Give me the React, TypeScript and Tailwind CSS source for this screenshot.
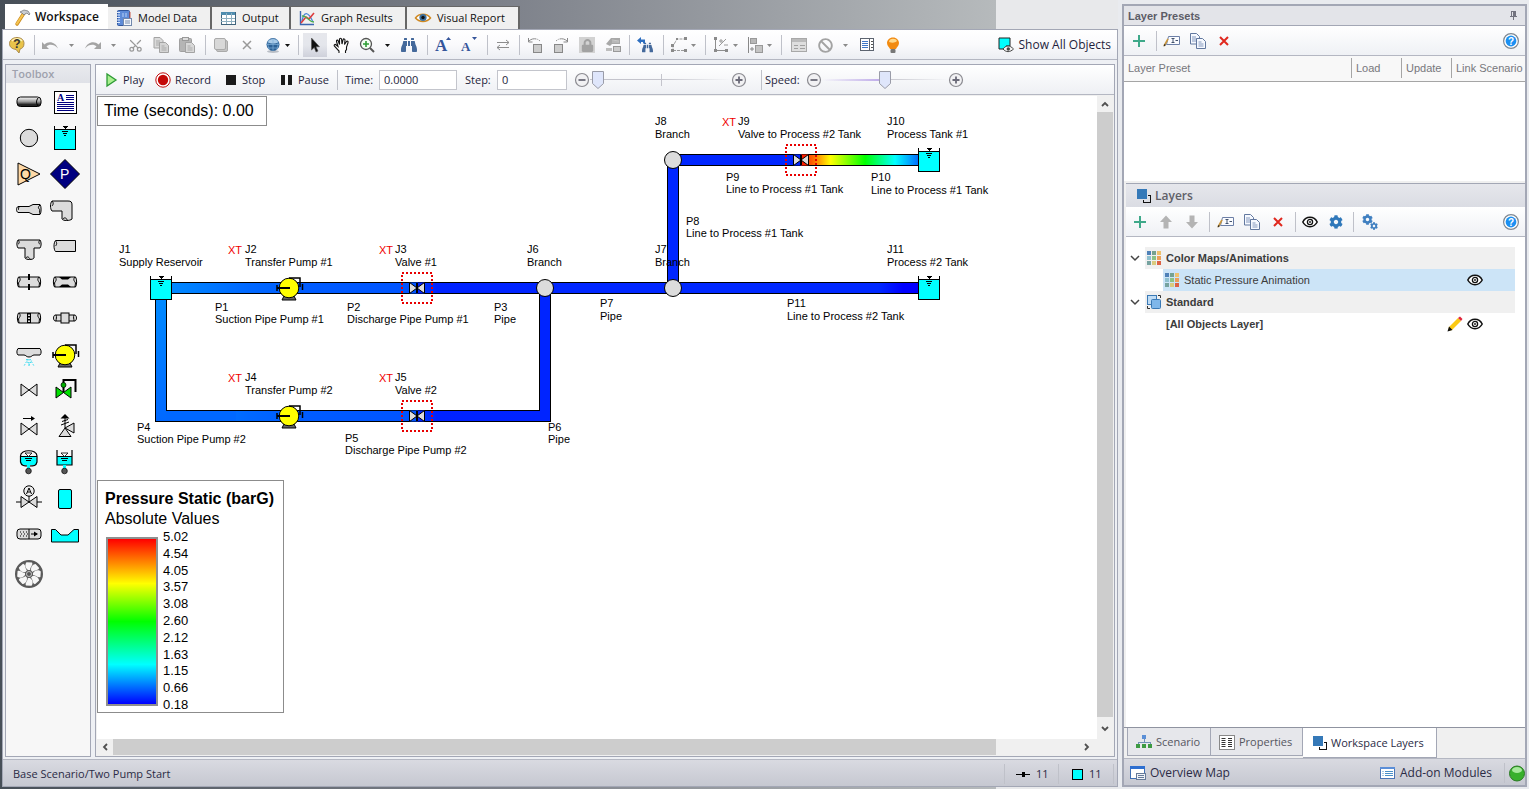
import React, { ReactNode, useState } from "react";
import { FaBan, FaBinoculars, FaCog, FaLock } from "react-icons/fa";
import { Scissors } from "lucide-react";

const UI_FONT = "font-['Open_Sans','Noto_Sans',sans-serif]";
const ARIAL = "font-['Liberation_Sans',Arial,sans-serif]";

type Svg_TP = {
  w?: number;
  h?: number;
  crisp?: boolean;
  children: ReactNode;
};

const Svg = ({ w = 16, h = 16, crisp, children }: Svg_TP) => (
  <svg
    width={w}
    height={h}
    viewBox={`0 0 ${w} ${h}`}
    className="shrink-0 overflow-visible"
    fill="none"
    shapeRendering={crisp ? "crispEdges" : undefined}
    aria-hidden="true"
  >
    {children}
  </svg>
);

/* ---------- tab icons ---------- */

const HammerIcon = () => (
  <Svg>
    <path d="M2 15 9 4" stroke="#c98a1c" strokeWidth="3.4" strokeLinecap="round" />
    <path d="M2 14.6 9 4" stroke="#f6c552" strokeWidth="2" strokeLinecap="round" />
    <path d="M5 3 9 1l4 1 2 3-1 1-2-2-2 1-1 1-2-2Z" fill="#c9cdd2" stroke="#6b6f76" strokeWidth=".7" />
  </Svg>
);

const NotebookIcon = () => (
  <Svg>
    <rect x="1.5" y=".5" width="12" height="15" rx="1" fill="#5d8bd8" stroke="#2e549b" />
    <path d="M1 2.5h3M1 5h3M1 7.5h3M1 10h3M1 12.5h3" stroke="#dce8fb" />
    <path d="M6 4h5M6 6h5" stroke="#b9d2f8" strokeDasharray="2 1" />
    <path d="M14 2v10" stroke="#c85a4a" />
    <rect x="7.5" y="8.5" width="8" height="7" fill="#f5f8fd" stroke="#7188ac" />
    <path d="M9 11h5M9 13h5" stroke="#7188ac" />
  </Svg>
);

const TableIcon = () => (
  <Svg crisp>
    <rect x="1" y="2" width="14" height="12" fill="#fff" stroke="#40647c" />
    <rect x="1" y="2" width="14" height="3" fill="#4e8cae" />
    <path d="M1 8h14M1 11h14M6 3v11M11 3v11" stroke="#8fb0c0" />
  </Svg>
);

const GraphIcon = () => (
  <Svg>
    <path d="M1.5 1v13.5H15" stroke="#3a66b0" strokeWidth="1.4" />
    <path d="M3 11C5 1 9 1 14 12" stroke="#4a86d8" strokeWidth="1.4" />
    <path d="M2 13 7 7l3 2 5-6" stroke="#dd3b3b" strokeWidth="1.6" />
    <path d="M3 6c5-1 6 6 12 6" stroke="#4cae4c" strokeWidth="1.4" />
  </Svg>
);

const ColorEyeIcon = () => (
  <Svg>
    <path d="M.5 8C4 3 12 3 15.5 8 12 12.5 4 12.5.5 8Z" fill="#fff" stroke="#d08a24" strokeWidth="1.5" />
    <circle cx="8" cy="7.5" r="3.6" fill="#3c6f9c" />
    <circle cx="8" cy="7.5" r="1.7" fill="#111" />
  </Svg>
);

/* ---------- main toolbar icons ---------- */

const HelpBalloon = () => (
  <Svg w={18} h={18}>
    <path d="M9 1.5c4 0 7 2.4 7 6s-2 5-4 5.600L11 17l-3-3.600C4 13 1.5 11 1.5 7.5S5 1.5 9 1.5Z" fill="#e9c34a" stroke="#a98a4c" />
    <path d="M4 5c2-3 8-3 10 0" stroke="#fff3b8" strokeWidth="1.5" />
    <text x="9" y="12" textAnchor="middle" fontSize="12" fontWeight="700" fill="#333" fontFamily="Liberation Sans">?</text>
  </Svg>
);

const UndoIcon = ({ flip }: { flip?: boolean }) => (
  <Svg>
    <g transform={flip ? "matrix(-1 0 0 1 16 0)" : undefined}>
      <path d="M0 5v7h7L4.500 9.500C7 7 12 7 16 11.500 14 5.500 7 3 2.500 7.500Z" fill="#a4a4a4" />
    </g>
  </Svg>
);

const Caret = ({ dark }: { dark?: boolean }) => (
  <Svg w={5} h={3}>
    <path d="M0 0h5L2.5 3Z" fill={dark ? "#111" : "#8a8a8a"} />
  </Svg>
);

const CopyGray = () => (
  <Svg>
    <path d="M1 .5h6l3 3V11H1Z" fill="#dadada" stroke="#a3a3a3" />
    <path d="M3 4h4M3 6h5M3 8h5" stroke="#aaa" />
    <path d="M6.5 5.5h6l3 3v7h-9Z" fill="#d4d4d4" stroke="#a3a3a3" />
    <path d="M8.5 9h3M8.5 11h5M8.5 13h5" stroke="#aaa" />
  </Svg>
);

const PasteGray = () => (
  <Svg>
    <rect x=".5" y="1.5" width="12" height="13" rx="1" fill="#b5b5b5" stroke="#a0a0a0" />
    <rect x="3.5" y=".5" width="6" height="3" fill="#ddd" stroke="#999" />
    <path d="M6.5 5.5h6l3 3v7h-9Z" fill="#d8d8d8" stroke="#a3a3a3" />
    <path d="M8.5 9h3M8.5 11h5M8.5 13h5" stroke="#aaa" />
  </Svg>
);

const SquareGray = () => (
  <Svg>
    <rect x="3.5" y="3.5" width="11" height="11" rx="1.5" fill="#c4c4c4" stroke="#aaa" />
    <rect x="1.5" y="1.5" width="11" height="11" rx="1.5" fill="#d8d8d8" stroke="#aaa" />
  </Svg>
);

const CrossIcon = ({ color, width = 1.5 }: { color: string; width?: number }) => (
  <Svg w={10} h={10}>
    <path d="m1 1 8 8M9 1 1 9" stroke={color} strokeWidth={width} />
  </Svg>
);

const GlobeIcon = () => (
  <Svg>
    <ellipse cx="8" cy="14.5" rx="6" ry="1.5" fill="#b9bec6" />
    <circle cx="8" cy="7.5" r="6.5" fill="#2c6196" />
    <path d="M2.5 5C4 1 12 1 13.5 5 11 7 5 7 2.5 5Z" fill="#a9cbe8" />
    <path d="M8 1v13M1.5 7.5h13M3 11h10M4.5 2.5c-2 3-2 7 0 10M11.5 2.5c2 3 2 7 0 10" stroke="#7fb0da" strokeWidth=".7" />
  </Svg>
);

const PointerIcon = () => (
  <Svg>
    <path d="M4.5 1v12l2.800-2.600L9 15l2-.9-2-4.300h3.500Z" fill="#111" stroke="#555" strokeWidth=".6" />
  </Svg>
);

const HandIcon = () => (
  <Svg w={17} h={17}>
    <path
      d="M6 16v-2L1.500 9.200C.5 7.800 2 6.800 3.200 8L5 9.500 3.500 4.500C3.200 3 4.800 2.500 5.300 4L6.500 7.500V2.500c0-1.600 2-1.600 2.100 0L9 7l1-4.200c.4-1.500 2.200-1 2 .5L11.500 7.500l1.800-2.700c.8-1.200 2.200-.4 1.700.9L13.500 10v2.500L12.500 14v2"
      fill="#fff"
      stroke="#111"
      strokeWidth="1.1"
    />
  </Svg>
);

const ZoomIcon = () => (
  <Svg>
    <circle cx="7" cy="7" r="5.5" fill="#f6fff4" stroke="#555" strokeWidth="1.3" />
    <path d="m11 11 4 4" stroke="#555" strokeWidth="2" />
    <path d="M7 4v6M4 7h6" stroke="#2f9e35" strokeWidth="1.6" />
  </Svg>
);

const FontSizeIcon = ({ down }: { down?: boolean }) => (
  <Svg w={18} h={20}>
    <text x="1" y="16" fontSize={down ? 13 : 17} fontWeight="700" fill="#35559a" fontFamily="Liberation Serif">A</text>
    <path d={down ? "M12 2h5l-2.500 3Z" : "M12 5h5l-2.500-3Z"} fill="#35559a" />
  </Svg>
);

const SwapIcon = () => (
  <Svg>
    <path d="M2 5.500h12M2 10.500h12M11 3l3 2.500L11 8M5 8l-3 2.500L5 13" stroke="#8d8d8d" />
  </Svg>
);

const RotateIcon = ({ flip }: { flip?: boolean }) => (
  <Svg>
    <g transform={flip ? "matrix(-1 0 0 1 16 0)" : undefined}>
      <rect x="6.5" y="7.5" width="8" height="8" fill="#ccc" stroke="#888" />
      <path d="M2 4c3-3 8-3 11 0" stroke="#888" strokeDasharray="8 1 1 1" />
      <path d="M1.5 1v4h4" stroke="#888" />
    </g>
  </Svg>
);

const SnapHandIcon = () => (
  <Svg>
    <path d="M1 7 6 1h9v6H7L5 9Z" fill="#a8a8a8" />
    <path d="m7 3 7 1M7 5h7" stroke="#c8c8c8" />
    <rect x="8.5" y="9.5" width="7" height="5" fill="#ccc" stroke="#999" />
    <path d="M1 11h6v3H1Z" fill="#bdbdbd" />
  </Svg>
);

const FindPrevIcon = () => (
  <div className="relative flex h-4 w-4 items-end justify-end">
    <FaBinoculars size={11} color="#44699b" />
    <svg className="absolute left-0 top-0" width="9" height="7" viewBox="0 0 9 7" aria-hidden="true">
      <path d="M0 3.5 4 0v2.5h4v4H6V5H4v2Z" fill="#2e6fc0" />
    </svg>
  </div>
);

const PolyIcon = () => (
  <Svg>
    <path d="M2 14.500V9l4-7h8M2 13.500h12" stroke="#999" strokeDasharray="3 1" />
    <path d="M13 0h3v3h-3zM0 7h3v3H0zM0 12h3v3H0zM13 12h3v3h-3zM5 1h2v2H5z" fill="#8a8a8a" />
  </Svg>
);

const AxisIcon = () => (
  <Svg>
    <path d="M2.500 1v12.500H14" stroke="#8d8d8d" />
    <path d="M1 0h3v3H1zM1 12h3v3H1zM12 12h3v3h-3z" fill="#8a8a8a" />
    <path d="M6 9 13 2M8 2v4M6 4h4M11 8h4" stroke="#999" />
  </Svg>
);

const AlignIcon = () => (
  <Svg>
    <path d="M1.5 0v16" stroke="#888" />
    <rect x="3.5" y="1.5" width="6" height="5" fill="#b8b8b8" stroke="#999" />
    <rect x="8.5" y="8.5" width="7" height="7" fill="#c4c4c4" stroke="#999" />
    <path d="M3 12h4M5 10v4" stroke="#888" />
  </Svg>
);

const FormIcon = () => (
  <Svg>
    <rect x=".5" y="1.5" width="15" height="13" fill="#dedede" stroke="#a8a8a8" />
    <path d="M1 2h14v3H1z" fill="#bbb" />
    <path d="M3 8.500h4M3 11.500h4M9 8.500h5M9 11.500h5" stroke="#a0a0a0" />
  </Svg>
);

const ListWindowIcon = () => (
  <Svg>
    <rect x="1.5" y="1.500" width="13" height="12" fill="#fff" stroke="#5d6470" />
    <path d="M10.500 2v11" stroke="#5d6470" />
    <path d="M3 4.500h6M3 6.500h6M3 8.500h6M3 10.500h6" stroke="#3f78c8" />
    <path d="M12 4.500h2M12 7.500h2M12 10.500h2" stroke="#555" />
  </Svg>
);

const BulbIcon = () => (
  <Svg w={14} h={17}>
    <path d="M7 .5C3.500.5 1 3 1 6s2.500 4.500 3 6h6c.5-1.500 3-3 3-6S10.500.5 7 .5Z" fill="#f28a10" />
    <path d="M3 5c0-4 7-4 8-1-2 2-5 2-8 1Z" fill="#ffd98c" />
    <rect x="4.5" y="12" width="5" height="4" rx="1" fill="#777" />
  </Svg>
);

const ShowAllIcon = () => (
  <Svg>
    <path d="M1 1h11v8H8v3H1Z" fill="#0ff" stroke="#222" />
    <path d="M5 12c3-4 7-4 10.500 0C12 15.500 8 15.500 5 12Z" fill="#f3f3f3" stroke="#444" />
    <circle cx="10.3" cy="12" r="1.7" fill="#444" />
  </Svg>
);

/* ---------- toolbox icons ---------- */

const P = "#dcdcdc";

const PipeIcon = () => (
  <Svg w={26} h={12}>
    <defs>
      <linearGradient id="pipe" x1="0" y1="0" x2="0" y2="1">
        <stop offset="0" stopColor="#fff" />
        <stop offset=".5" stopColor="#999" />
        <stop offset=".8" stopColor="#222" />
      </linearGradient>
    </defs>
    <rect x="1" y="1" width="24" height="9.5" rx="3.5" fill="url(#pipe)" stroke="#000" />
    <path d="M22 2c-2 3-2 5 0 8" stroke="#000" />
  </Svg>
);

const AnnotationIcon = () => (
  <Svg w={23} h={23}>
    <rect x=".5" y=".5" width="22" height="22" fill="#fff" stroke="#000" />
    <text x="3" y="10" fontSize="10" fill="#000080" fontFamily="Liberation Serif" fontWeight="700">A</text>
    <path d="M12 4.500h8M12 6.500h8M12 8.500h8M3 11.500h17M3 13.500h17M3 15.500h17M3 17.500h17M3 19.500h17" stroke="#000080" />
  </Svg>
);

const BranchIcon = () => (
  <Svg w={20} h={20}>
    <circle cx="10" cy="10" r="8.7" fill={P} stroke="#000" />
  </Svg>
);

const ReservoirIcon = () => (
  <Svg w={24} h={26} crisp>
    <rect x="2" y="4" width="20" height="20" fill="#0ff" />
    <path d="M1.5 1v23.5h21V1M1.5 4.5h21" stroke="#000" />
    <path d="M9 1h6l-3 3Z" fill="#000" />
    <path d="M9 6.5h6M10 8.5h4M11 10.5h2" stroke="#000" />
  </Svg>
);

const FlowIcon = () => (
  <Svg w={26} h={26}>
    <path d="M2 2v22l22-11Z" fill="#ffd9a6" stroke="#000" />
    <text x="4" y="18" fontSize="14" fill="#000" fontFamily="Liberation Sans">Q</text>
  </Svg>
);

const PressureIcon = () => (
  <Svg w={30} h={30}>
    <path d="M15 .5 29.500 15 15 29.500.5 15Z" fill="#000080" stroke="#000" />
    <text x="10" y="20" fontSize="14" fill="#fff" fontFamily="Liberation Sans">P</text>
  </Svg>
);

const AreaChangeIcon = () => (
  <Svg w={26} h={14}>
    <path d="M2 3.500h11l4-2h7c1.500 2 1.500 8 0 10h-7l-4-2H2C0 8.500 0 4.500 2 3.500Z" fill={P} stroke="#000" />
    <path d="M3 4c-1 1.500 0 2.500-1 3M24 2c-3 3-1 4 0 4.500-1 2 0 3 0 4.500" stroke="#000" />
  </Svg>
);

const BendIcon = () => (
  <Svg w={30} h={20}>
    <path d="M2 1h16c3 0 4 1 4 4v14c-2 2-9 2-10 0v-8H2c-2-2-2-8 0-10Z" fill={P} stroke="#000" />
    <path d="M2 1c2 2 1 4 0 5M13 19c1-2 4-1 4 1" stroke="#000" />
  </Svg>
);

const TeeIcon = () => (
  <Svg w={26} h={14}>
    <path d="M2 1h22c1.500 2 1.500 6 0 8h-6v10c-1 2-8 2-9 0V9H2C.5 7 .5 3 2 1Z" fill={P} stroke="#000" />
    <path d="M2 1c2 2 1 4 0 4M24 1c-2 2-1 4 0 4M10 19c1-2 3-1 4 1" stroke="#000" />
  </Svg>
);

const DeadEndIcon = () => (
  <Svg w={24} h={14}>
    <path d="M2.500 1.500h20v11h-20c-2-2-2-9 0-11Z" fill={P} stroke="#000" />
    <path d="M2.500 2c2 2 1 4 0 5" stroke="#000" />
  </Svg>
);

const Segment = ({ children }: { children?: ReactNode }) => (
  <Svg w={26} h={16}>
    <path d="M2.500 3h21c1.500 2 1.500 8 0 10h-21C1 11 1 5 2.500 3Z" fill={P} stroke="#000" />
    <path d="M3 3c2 2 1 4 0 5-1 1 0 3 0 5M23 3c-2 2-1 4 0 5 1 1 0 3 0 5" stroke="#000" />
    {children}
  </Svg>
);

const OrificeIcon = () => (
  <Segment>
    <path d="M13 0v6M13 10v6" stroke="#000" strokeWidth="2" />
  </Segment>
);

const VenturiIcon = () => (
  <Segment>
    <path d="M7 3h12l-3 2.500h-6ZM7 13h12l-3-2.500h-6Z" fill="#000" />
  </Segment>
);

const ScreenIcon = () => (
  <Segment>
    <path d="M11.500 3v10M14.500 3v10" stroke="#000" />
    <path d="M13 3v10" stroke="#000" strokeWidth="2" strokeDasharray="1.5 1.5" />
  </Segment>
);

const FittingIcon = () => (
  <Svg w={26} h={12}>
    <path d="M3 3h20c2 1 2 5 0 6H3C1 8 1 4 3 3Z" fill={P} stroke="#000" />
    <rect x="9" y="1" width="8" height="10" fill={P} stroke="#000" />
    <path d="M4 3c1 2 0 4 0 6M22 3c-1 2 0 4 0 6" stroke="#000" />
  </Svg>
);

const SprayIcon = () => (
  <Svg w={26} h={14}>
    <path d="M2 1.500h22c1.500 2 1.500 5 0 6.500h-6c-2 0-2 2-5 2s-3-2-5-2H2C.5 6.500.5 3.500 2 1.500Z" fill={P} stroke="#000" />
    <path d="M12 12 8 19M14 12l4 7M13 12v7M10.500 12 13 18l3-5" stroke="#25d8f0" strokeDasharray="1.5 1.5" />
  </Svg>
);

// shared by the toolbox and the nodes on the canvas
const PumpShape = () => (
  <>
    <path d="M8 20 6 24h14l-2-4Z" fill="#666" stroke="#000" />
    <circle cx="13" cy="12" r="9.8" fill="#ff0" stroke="#000" />
    <path d="M13 2h11v9M26.500 8v6M1 9v6" stroke="#000" strokeWidth="1.5" fill="none" />
    <path d="M1 12h13" stroke="#000" strokeWidth="2" />
  </>
);

const PumpIcon = () => (
  <Svg w={27} h={23}>
    <PumpShape />
  </Svg>
);

const ValveIcon = () => (
  <Svg w={18} h={14}>
    <path d="M1 1v12L17 1v12Z" fill={P} stroke="#000" />
  </Svg>
);

const ControlValveIcon = () => (
  <Svg w={20} h={22}>
    <path d="M1 8v11l15-11v11Z" fill="#00e000" stroke="#000" />
    <path d="M8.500 13V1h12v12" stroke="#000" strokeWidth="2" />
    <circle cx="8.5" cy="6" r="2.5" fill="#00b000" stroke="#000" strokeWidth=".7" />
  </Svg>
);

const CheckValveIcon = () => (
  <Svg w={18} h={20}>
    <path d="M1 7v12L17 7v12Z" fill={P} stroke="#000" />
    <path d="M3 2.500h9" stroke="#000" />
    <path d="M11 0v5l4-2.500Z" fill="#000" />
  </Svg>
);

const ReliefValveIcon = () => (
  <Svg w={15} h={24}>
    <path d="m7 14 9-5v10ZM7 14l6 8.500H1Z" fill={P} stroke="#000" />
    <path d="M7 14V3M3 11l8-3M4 7.500l6-2" stroke="#000" />
    <path d="M2.500 4.500h9L7 0Z" fill="#000" />
  </Svg>
);

const AccumulatorIcon = ({ open }: { open?: boolean }) => (
  <Svg w={20} h={26}>
    <rect x={open ? 2 : 1.5} y="8" width={open ? 15 : 16.5} height="8" rx={open ? 0 : 2} fill="#0ff" />
    <path
      d={open ? "M2 1v15h15V1M2 7.500h15" : "M1.500 7c0-7 16.500-7 16.500 0v6c-1 4-3 4-8 4s-7.500 0-8.500-4ZM1.500 7.500H18"}
      stroke="#000"
      strokeWidth="1.2"
    />
    <path d="M6 4h7l-3.500 3.500Z" fill="#fff" stroke="#000" strokeWidth=".8" />
    <path d="M6 9.500h7M7 11.500h5" stroke="#000" />
    <path d="M9.500 16v5" stroke="#0ff" strokeWidth="3" />
    <circle cx="9.5" cy="22" r="2.8" fill="#555" stroke="#000" strokeWidth=".7" />
  </Svg>
);

const ActuatorIcon = () => (
  <Svg w={26} h={26}>
    <circle cx="13" cy="6" r="5.2" fill="#eee" stroke="#000" />
    <path d="M10.500 9 13 3l2.500 6M11.500 7h3M13 11v6M0 17h26" stroke="#000" />
    <path d="M5 11.500v11l16-11v11Z" fill={P} stroke="#000" />
  </Svg>
);

const VesselIcon = () => (
  <Svg w={16} h={20}>
    <rect x="1.5" y="1.5" width="13" height="19" rx="1.5" fill="#0ff" stroke="#000" />
  </Svg>
);

const SeparatorIcon = () => (
  <Svg w={26} h={12}>
    <rect x="1" y="1" width="24" height="10" rx="3" fill={P} stroke="#000" />
    <path d="M13 1v10M15 6h6" stroke="#000" />
    <path d="M18 3.500v5l4-2.500Z" fill="#000" />
    <path d="M4 4h8M5 6h7M4 8h8" stroke="#000" strokeDasharray="1 2" />
  </Svg>
);

const WeirIcon = () => (
  <Svg w={28} h={13}>
    <path d="M.5 1.500h4L10 7h7l6-5.500h4.500v12.500H.5Z" fill="#0ff" stroke="#000" />
  </Svg>
);

const TurbineIcon = () => (
  <Svg w={30} h={30}>
    <circle cx="15" cy="15" r="13" fill="#5f5f5f" stroke="#5a5a5a" strokeWidth="2" />
    {[0, 45, 90, 135, 180, 225, 270, 315].map((deg) => (
      <path key={deg} d="M14 11C10.500 8.500 11 5 12.500 3.200L18 3.600C19.500 6 16 8 16.200 11Z" fill="#f7f7f7" transform={`rotate(${deg} 15 15)`} />
    ))}
    <circle cx="15" cy="15" r="2.5" fill="#555" stroke="#ddd" strokeWidth=".8" />
  </Svg>
);

/* ---------- layer panel icons ---------- */

const PlusIcon = () => (
  <Svg w={12} h={12} crisp>
    <path d="M5 0h2v12H5zM0 5h12v2H0z" fill="#3fa98a" />
  </Svg>
);

const RenameIcon = () => (
  <Svg w={18} h={12}>
    <path d="M5.500 1.500h11v8h-13Z" fill="#fbfcff" stroke="#6c7fa6" />
    <path d="M8.500 3.500h3M8.500 7.500h3M10 3.500v4M12.500 5.500h2.500" stroke="#44546e" />
    <path d="m1 11 4-7" stroke="#c9953a" strokeWidth="1.6" />
    <path d="m.5 11.500 1-2.500 1.500 1Z" fill="#222" />
  </Svg>
);

const CopyIcon = () => (
  <Svg>
    <path d="M.5.5h6l3 3V11H.5Z" fill="#f6f9ff" stroke="#62789f" />
    <path d="M2 4h4M2 6h5M2 8h5" stroke="#8498bd" />
    <path d="M6.5 5.5h6l3 3v7h-9Z" fill="#f6f9ff" stroke="#62789f" />
    <path d="M8.5 9h3M8.5 11h5M8.5 13h5" stroke="#8498bd" />
  </Svg>
);

const InfoIcon = () => (
  <Svg>
    <circle cx="8" cy="8" r="7.4" fill="#fff" stroke="#7d8791" strokeWidth="1.2" />
    <circle cx="8" cy="8" r="5.4" fill="#1b90f2" />
    <text x="8" y="11.5" textAnchor="middle" fontSize="10" fontWeight="700" fill="#fff" fontFamily="Liberation Sans">?</text>
  </Svg>
);

const PinIcon = () => (
  <Svg w={7} h={9} crisp>
    <path d="M1 0h5v5H1zM0 5h7v1H0zM3 6h1v3H3z" fill="#73737f" />
    <path d="M2 1h1v4H2z" fill="#e3e4e9" />
  </Svg>
);

const ArrowIcon = ({ down }: { down?: boolean }) => (
  <Svg w={14} h={14}>
    <path d="M7 .5 13 7H9.500v6.500h-5V7H1Z" fill="#b4b4b4" transform={down ? "rotate(180 7 7)" : undefined} />
  </Svg>
);

const EyeIcon = () => (
  <Svg w={16} h={12}>
    <path d="M.8 6C4-.2 12-.2 15.200 6 12 12.200 4 12.200.8 6Z" fill="#fff" stroke="#111" strokeWidth="1.5" />
    <circle cx="8" cy="6" r="2.6" stroke="#111" strokeWidth="1.3" />
    <circle cx="8" cy="6" r=".9" fill="#111" />
  </Svg>
);

const GearsIcon = () => (
  <div className="relative h-4 w-4">
    <FaCog size={11} color="#3f7fc0" />
    <FaCog size={8} color="#3f7fc0" className="absolute bottom-0 right-0" />
  </div>
);

const GridIcon = () => {
  const colors = ["#4f81b8", "#76a290", "#efc16c", "#8fc0cf", "#8cc286", "#eba15a", "#76a3a0", "#d9cb7f", "#dd6245"];
  return (
    <Svg w={14} h={14} crisp>
      {colors.map((c, i) => (
        <rect key={c} x={(i % 3) * 5} y={Math.floor(i / 3) * 5} width="4" height="4" fill={c} />
      ))}
    </Svg>
  );
};

const StandardIcon = () => (
  <Svg w={14} h={14}>
    <rect x=".5" y=".5" width="9" height="9" fill="#bfdcf5" stroke="#3a79b5" />
    <rect x="4.5" y="4.5" width="9" height="9" rx="1" fill="#7fb7ea" stroke="#3a79b5" />
    <path d="M11 .5h2.500V3M.5 11v2.500H3" stroke="#333" />
  </Svg>
);

const LayersIcon = () => (
  <Svg w={14} h={14} crisp>
    <path d="M0 0h10v10H0z" fill="#3579b8" />
    <path d="M11 6h3v8H6v-3h1v2h6V7h-2Z" fill="#111" />
  </Svg>
);

const PencilIcon = () => (
  <Svg>
    <path d="M1 15 2 11 11 2l3 3-9 9Z" fill="#fbc913" />
    <path d="m11 2 2-1.500L15.500 3 14 5Z" fill="#e0263c" />
    <path d="m.5 15.500 1.500-5L5.500 14Z" fill="#111" />
  </Svg>
);

const ScenarioIcon = () => (
  <Svg crisp>
    <path d="M8 4v5M2 11V8h12v3" stroke="#6f90b5" />
    <path d="M6 1h4v4H6z" fill="#5b8fd6" />
    <path d="M0 10h4v4H0zM6 10h4v4H6zM12 10h4v4h-4z" fill="#3d9a42" />
  </Svg>
);

const PropertiesIcon = () => (
  <Svg>
    <rect x=".5" y="1.5" width="15" height="14" fill="#fff" stroke="#888" />
    <path d="M2.500 4.500h4M2.500 6.500h4M2.500 8.500h4M2.500 10.500h4M2.500 12.500h4M9 4.500h4M9 6.500h4M9 8.500h4M9 10.500h4M9 12.500h4" stroke="#333" />
  </Svg>
);

const OverviewIcon = () => (
  <Svg>
    <rect x=".5" y="1.5" width="14" height="12" fill="#fff" stroke="#3f6fb5" />
    <path d="M0 1h15v3H0z" fill="#2f6fd0" />
    <rect x="6.5" y="8.500" width="9" height="6" fill="#eef2f8" stroke="#667a99" />
    <path d="M8 10.500h6M8 12.500h6" stroke="#667a99" />
  </Svg>
);

const ModulesIcon = () => (
  <Svg>
    <rect x=".5" y="2.500" width="14" height="11" fill="#fff" stroke="#4b75b5" />
    <path d="M0 2h15v2H0z" fill="#5c8fd8" />
    <path d="M2.500 6.500h1M2.500 8.500h1M2.500 10.500h1M5 6.500h8M5 8.500h8M5 10.500h8" stroke="#4a90c8" />
  </Svg>
);

/* ---------- shared parts ---------- */

const Sep = ({ className }: { className: string }) => (
  <span className={`flex shrink-0 justify-center ${className}`}>
    <span className="h-5 w-px bg-[#bfc1c9]" />
  </span>
);

type ToolButton_TP = {
  label: string;
  className: string;
  children: ReactNode;
};

const ToolButton = ({ label, className, children }: ToolButton_TP) => (
  <button
    type="button"
    aria-label={label}
    className={`flex h-6 shrink-0 items-center justify-center gap-1 ${className}`}
  >
    {children}
  </button>
);

/* ---------- top tabs ---------- */

const tabs = [
  { title: "Model Data", icon: <NotebookIcon />, className: "w-[104px]" },
  { title: "Output", icon: <TableIcon />, className: "w-[79px]" },
  { title: "Graph Results", icon: <GraphIcon />, className: "w-[116px]" },
  { title: "Visual Report", icon: <ColorEyeIcon />, className: "w-[113px]" },
];

const TopTabs = () => (
  <nav className="flex h-[29px] shrink-0 items-end pl-[3px]" aria-label="Views">
    <button type="button" className="flex h-[25px] w-[103px] items-center gap-1 bg-white pl-2.5 font-semibold">
      <HammerIcon />
      Workspace
    </button>
    {tabs.map((tab) => (
      <button
        key={tab.title}
        type="button"
        className={`flex h-[23px] items-center gap-1.5 border-r-2 border-t border-[#666] bg-[#f0f0f0] pl-2 text-[11px] whitespace-nowrap ${tab.className}`}
      >
        {tab.icon}
        {tab.title}
      </button>
    ))}
  </nav>
);

const MainToolbar = () => (
  <div className="flex h-[30px] shrink-0 items-center overflow-hidden border-b border-[#b4b7c2] bg-linear-to-b from-white via-[#fafafc] to-[#eceef3] pl-0.5 pt-px">
    <ToolButton label="Help" className="w-6"><HelpBalloon /></ToolButton>
    <Sep className="w-2.5" />
    <ToolButton label="Undo" className="w-[22px]"><UndoIcon /></ToolButton>
    <ToolButton label="Undo list" className="w-5"><Caret /></ToolButton>
    <ToolButton label="Redo" className="w-6"><UndoIcon flip /></ToolButton>
    <ToolButton label="Redo list" className="w-4"><Caret /></ToolButton>
    <ToolButton label="Cut" className="w-7"><Scissors size={15} color="#999" className="-rotate-90" /></ToolButton>
    <ToolButton label="Copy" className="w-6"><CopyGray /></ToolButton>
    <ToolButton label="Paste" className="w-7"><PasteGray /></ToolButton>
    <Sep className="w-2" />
    <ToolButton label="Duplicate" className="w-6"><SquareGray /></ToolButton>
    <ToolButton label="Delete" className="w-7"><CrossIcon color="#999" /></ToolButton>
    <ToolButton label="Web" className="w-8"><GlobeIcon /><Caret dark /></ToolButton>
    <Sep className="w-2.5" />
    <ToolButton label="Select" className="w-6 bg-linear-to-b from-[#e6e7ec] via-[#e4e6ec] to-[#cfd1db]"><PointerIcon /></ToolButton>
    <ToolButton label="Pan" className="w-7"><HandIcon /></ToolButton>
    <ToolButton label="Zoom" className="w-6"><ZoomIcon /></ToolButton>
    <ToolButton label="Zoom list" className="w-4"><Caret dark /></ToolButton>
    <ToolButton label="Find" className="w-7"><FaBinoculars size={16} color="#44699b" /></ToolButton>
    <Sep className="w-2" />
    <ToolButton label="Larger text" className="w-6"><FontSizeIcon /></ToolButton>
    <ToolButton label="Smaller text" className="w-7"><FontSizeIcon down /></ToolButton>
    <Sep className="w-2" />
    <ToolButton label="Reverse" className="w-6"><SwapIcon /></ToolButton>
    <Sep className="w-2" />
    <ToolButton label="Rotate left" className="w-6"><RotateIcon /></ToolButton>
    <ToolButton label="Rotate right" className="w-7"><RotateIcon flip /></ToolButton>
    <ToolButton label="Lock" className="w-6">
      <span className="flex h-4 w-4 items-center justify-center bg-[#d2d2d2]"><FaLock size={13} color="#a2a2a2" /></span>
    </ToolButton>
    <ToolButton label="Customize" className="w-7"><SnapHandIcon /></ToolButton>
    <Sep className="w-1" />
    <ToolButton label="Find previous" className="w-7"><FindPrevIcon /></ToolButton>
    <Sep className="w-2" />
    <ToolButton label="Segments" className="w-8"><PolyIcon /><Caret /></ToolButton>
    <Sep className="w-3" />
    <ToolButton label="Scale" className="w-7"><AxisIcon /><Caret /></ToolButton>
    <ToolButton label="Align" className="w-10"><AlignIcon /><Caret /></ToolButton>
    <Sep className="w-1" />
    <ToolButton label="Edit" className="w-8"><FormIcon /></ToolButton>
    <ToolButton label="Special conditions" className="w-5"><FaBan size={15} color="#a3a3a3" /></ToolButton>
    <ToolButton label="Special conditions list" className="w-5"><Caret /></ToolButton>
    <ToolButton label="Inspect" className="w-6"><ListWindowIcon /></ToolButton>
    <ToolButton label="Tips" className="w-7"><BulbIcon /></ToolButton>
    <button type="button" className="ml-auto flex shrink-0 items-center gap-1 pr-1.5 text-[#1e1e3c]">
      <ShowAllIcon />
      Show All Objects
    </button>
  </div>
);

/* ---------- toolbox ---------- */

const toolboxItems: [string, ReactNode][] = [
  ["Pipe", <PipeIcon />],
  ["Annotation", <AnnotationIcon />],
  ["Branch", <BranchIcon />],
  ["Reservoir", <ReservoirIcon />],
  ["Assigned Flow", <FlowIcon />],
  ["Assigned Pressure", <PressureIcon />],
  ["Area Change", <AreaChangeIcon />],
  ["Bend", <BendIcon />],
  ["Tee", <TeeIcon />],
  ["Dead End", <DeadEndIcon />],
  ["Orifice", <OrificeIcon />],
  ["Venturi", <VenturiIcon />],
  ["Screen", <ScreenIcon />],
  ["General Component", <FittingIcon />],
  ["Spray Discharge", <SprayIcon />],
  ["Pump", <PumpIcon />],
  ["Valve", <ValveIcon />],
  ["Control Valve", <ControlValveIcon />],
  ["Check Valve", <CheckValveIcon />],
  ["Relief Valve", <ReliefValveIcon />],
  ["Gas Accumulator", <AccumulatorIcon />],
  ["Surge Tank", <AccumulatorIcon open />],
  ["Vacuum Breaker", <ActuatorIcon />],
  ["Heat Exchanger", <VesselIcon />],
  ["Volume Balance", <SeparatorIcon />],
  ["Weir", <WeirIcon />],
];

const Toolbox = () => (
  <section className="flex w-[86px] shrink-0 flex-col border border-[#a3a7b5] bg-[#f7f7f7]" aria-label="Toolbox">
    <h2 className="h-[18px] shrink-0 bg-linear-to-b from-[#e9eaee] to-[#dfe1e7] pl-1.5 text-[11px] font-semibold leading-[18px] text-[#9ea1ad]">
      Toolbox
    </h2>
    <div className="grid grid-cols-[36px_36px] auto-rows-[36px] pl-[5px] pt-px">
      {toolboxItems.map(([label, icon]) => (
        <button key={label} type="button" aria-label={label} className="flex items-center justify-center">
          {icon}
        </button>
      ))}
      <button type="button" aria-label="Turbine" className="flex h-11 items-center justify-center">
        <TurbineIcon />
      </button>
    </div>
  </section>
);

/* ---------- playback bar ---------- */

const RoundButton = ({ label, plus }: { label: string; plus?: boolean }) => (
  <button type="button" aria-label={label} className="shrink-0">
    <Svg>
      <circle cx="8" cy="8" r="6.5" fill="#f1f1f3" stroke="#8b8b91" strokeWidth="1.2" />
      <path d={plus ? "M4.500 8h7M8 4.500v7" : "M4.500 8h7"} stroke="#6a6a78" strokeWidth="1.8" />
    </Svg>
  </button>
);

type Slider_TP = {
  label: string;
  start: number;
  className: string;
  children: ReactNode;
};

const Slider = ({ label, start, className, children }: Slider_TP) => {
  const [value, setValue] = useState(start);
  return (
    <div className={`relative flex h-5 shrink-0 items-center ${className}`}>
      {children}
      <span className="absolute top-px -translate-x-1/2" style={{ left: `${value}%` }}>
        <Svg w={12} h={18}>
          <path d="M.5.5h11v12L6 17.500.5 12.500Z" fill="#dfe6fb" stroke="#9a9ca8" />
        </Svg>
      </span>
      <input
        type="range"
        aria-label={label}
        min={0}
        max={100}
        value={value}
        onChange={(e) => setValue(Number(e.target.value))}
        className="absolute inset-0 w-full opacity-0"
      />
    </div>
  );
};

const PlayBar = () => (
  <div className="flex h-[30px] shrink-0 items-center overflow-hidden border-b border-[#b4b7c2] bg-linear-to-b from-white to-[#eef0f4] pl-2.5 text-[11px] text-[#1e1e3c]">
    <button type="button" className="flex w-[49px] shrink-0 items-center gap-1.5">
      <Svg w={11} h={14}>
        <path d="M1 1v12l9-6Z" fill="#a9f08f" stroke="#2c9a34" strokeWidth="1.3" />
      </Svg>
      Play
    </button>
    <button type="button" className="flex w-[71px] shrink-0 items-center gap-1">
      <Svg>
        <circle cx="8" cy="8" r="7.2" fill="#fff" stroke="#c00d0d" />
        <circle cx="8" cy="8" r="5.2" fill="#c40808" />
      </Svg>
      Record
    </button>
    <button type="button" className="flex w-[55px] shrink-0 items-center gap-1.5">
      <span className="h-2.5 w-2.5 bg-[#1b1b1b]" />
      Stop
    </button>
    <button type="button" className="flex w-[52px] shrink-0 items-center gap-1.5">
      <span className="flex gap-[3px]">
        <span className="h-2.5 w-1 bg-[#1b1b1b]" />
        <span className="h-2.5 w-1 bg-[#1b1b1b]" />
      </span>
      Pause
    </button>
    <Sep className="mr-1 w-2" />
    <label className="flex shrink-0 items-center">
      <span className="w-[34px]">Time:</span>
      <input type="text" defaultValue="0.0000" className="h-5 w-[78px] border border-[#c3c5cc] bg-white px-1 text-[11px] text-[#1e1e3c]" />
    </label>
    <label className="ml-2 flex shrink-0 items-center">
      <span className="w-8">Step:</span>
      <input type="text" defaultValue="0" className="h-5 w-[70px] border border-[#c3c5cc] bg-white px-1 text-[11px] text-[#1e1e3c]" />
    </label>
    <div className="ml-[7px] flex shrink-0 items-center">
      <RoundButton label="Step back" />
      <Slider label="Position" start={6} className="w-[141px]">
        <span className="h-px w-full bg-linear-to-r from-[#c4c4cc] via-[#c4c4cc] to-transparent" />
        <span className="absolute left-1/2 top-1 h-3 w-px bg-[#c4c4cc]" />
      </Slider>
      <RoundButton label="Step forward" plus />
    </div>
    <Sep className="ml-2.5 w-2" />
    <span className="w-[35px] shrink-0">Speed:</span>
    <div className="ml-1.5 flex shrink-0 items-center">
      <RoundButton label="Slower" />
      <Slider label="Speed" start={50} className="w-[126px]">
        <span className="h-0.5 w-1/2 bg-linear-to-r from-transparent to-[#bba6e8]" />
        <span className="h-px w-1/2 bg-linear-to-r from-[#c4c4cc] to-transparent" />
      </Slider>
      <RoundButton label="Faster" plus />
    </div>
  </div>
);

/* ---------- workspace canvas ---------- */

type Label_TP = { x: number; y: number; gap: number; id: string; text: string; xt?: number };

const labels: Label_TP[] = [
  { id: "J1", text: "Supply Reservoir", x: 119, y: 253, gap: 13 },
  { id: "J2", text: "Transfer Pump #1", x: 245, y: 253, gap: 13, xt: 228 },
  { id: "J3", text: "Valve #1", x: 395, y: 253, gap: 13, xt: 379 },
  { id: "J4", text: "Transfer Pump #2", x: 245, y: 381, gap: 13, xt: 228 },
  { id: "J5", text: "Valve #2", x: 395, y: 381, gap: 13, xt: 379 },
  { id: "J6", text: "Branch", x: 527, y: 253, gap: 13 },
  { id: "J7", text: "Branch", x: 655, y: 253, gap: 13 },
  { id: "J8", text: "Branch", x: 655, y: 125, gap: 13 },
  { id: "J9", text: "Valve to Process #2 Tank", x: 738, y: 125, gap: 13, xt: 722 },
  { id: "J10", text: "Process Tank #1", x: 887, y: 125, gap: 13 },
  { id: "J11", text: "Process #2 Tank", x: 887, y: 253, gap: 13 },
  { id: "P1", text: "Suction Pipe Pump #1", x: 215, y: 311, gap: 12 },
  { id: "P2", text: "Discharge Pipe Pump #1", x: 347, y: 311, gap: 12 },
  { id: "P3", text: "Pipe", x: 494, y: 311, gap: 12 },
  { id: "P4", text: "Suction Pipe Pump #2", x: 137, y: 431, gap: 12 },
  { id: "P5", text: "Discharge Pipe Pump #2", x: 345, y: 442, gap: 12 },
  { id: "P6", text: "Pipe", x: 548, y: 431, gap: 12 },
  { id: "P7", text: "Pipe", x: 600, y: 307, gap: 13 },
  { id: "P8", text: "Line to Process #1 Tank", x: 686, y: 225, gap: 12 },
  { id: "P9", text: "Line to Process #1 Tank", x: 726, y: 181, gap: 12 },
  { id: "P10", text: "Line to Process #1 Tank", x: 871, y: 181, gap: 13 },
  { id: "P11", text: "Line to Process #2 Tank", x: 787, y: 307, gap: 13 },
];

const Tank = ({ x, y }: { x: number; y: number }) => (
  <g transform={`translate(${x} ${y})`} shapeRendering="crispEdges">
    <rect x="0" y="3" width="21" height="20" fill="#0ff" />
    <path d="M.5 0v23.500h21V0M.5 3.500h21" fill="none" stroke="#000" />
    <path d="M8 0h6l-3 3Z" fill="#000" />
    <path d="M8 5.500h6M9 7.500h4M10 9.500h2" stroke="#000" />
  </g>
);

const Valve = ({ x, y, fill, right }: { x: number; y: number; fill: string; right: string }) => (
  <g transform={`translate(${x} ${y})`}>
    <rect x="-7.5" y="-5.5" width="8" height="11" fill={fill} />
    <rect x="0" y="-5.5" width="7.5" height="11" fill={right} />
    <path d="M-7.500-5.500v11L0 0ZM7.500-5.500v11L0 0Z" fill={P} stroke="#000" />
    <path d="M0-5v10" stroke="#000" strokeWidth="2" />
    <rect x="-15" y="-15" width="30" height="30" fill="none" stroke="#e80000" strokeWidth="2" strokeDasharray="2 2" />
  </g>
);

// the viewBox starts where the drawing area starts in model coordinates
const Diagram = () => (
  <svg
    width="1000"
    height="642"
    viewBox="97 96 1000 642"
    className={`block ${ARIAL} text-[11px]`}
    role="img"
    aria-label="Pipe network"
  >
    <defs>
      <linearGradient id="g1" gradientUnits="userSpaceOnUse" x1="172" x2="550" y1="0" y2="0">
        <stop offset="0" stopColor="#0088ff" />
        <stop offset=".2" stopColor="#0068ff" />
        <stop offset=".35" stopColor="#005cff" />
        <stop offset=".62" stopColor="#0054ff" />
        <stop offset=".7" stopColor="#0022ff" />
        <stop offset="1" stopColor="#0024ff" />
      </linearGradient>
      <linearGradient id="g4" gradientUnits="userSpaceOnUse" x1="0" x2="0" y1="290" y2="421">
        <stop offset="0" stopColor="#008cff" />
        <stop offset="1" stopColor="#0068ff" />
      </linearGradient>
      <linearGradient id="g10" gradientUnits="userSpaceOnUse" x1="803" x2="918" y1="0" y2="0">
        <stop offset="0" stopColor="#ff2a00" />
        <stop offset=".08" stopColor="#ff6000" />
        <stop offset=".24" stopColor="#ffff00" />
        <stop offset=".54" stopColor="#00ff00" />
        <stop offset=".8" stopColor="#00ffff" />
        <stop offset="1" stopColor="#0070ff" />
      </linearGradient>
      <linearGradient id="g11" gradientUnits="userSpaceOnUse" x1="673" x2="918" y1="0" y2="0">
        <stop offset=".84" stopColor="#0028ff" />
        <stop offset=".94" stopColor="#0000ff" />
      </linearGradient>
    </defs>

    <g shapeRendering="crispEdges" fill="none">
      <path d="M161 288v128h384V288M161 288h757M673 288V160h245" stroke="#000" strokeWidth="12" />
      <rect x="166" y="283" width="379" height="10" fill="url(#g1)" />
      <rect x="156" y="290" width="10" height="131" fill="url(#g4)" />
      <rect x="166" y="411" width="384" height="10" fill="url(#g1)" />
      <rect x="166" y="411" width="70" height="10" fill="#0068ff" />
      <rect x="540" y="290" width="10" height="131" fill="#0024ff" />
      <rect x="545" y="283" width="130" height="10" fill="#0026ff" />
      <rect x="673" y="283" width="245" height="10" fill="url(#g11)" />
      <rect x="668" y="160" width="10" height="126" fill="#0026ff" />
      <rect x="673" y="155" width="128" height="10" fill="#0026ff" />
      <rect x="803" y="155" width="115" height="10" fill="url(#g10)" />
    </g>

    {[[545, 288], [673, 288], [673, 160]].map(([x, y]) => (
      <circle key={`${x}-${y}`} cx={x} cy={y} r="8.5" fill={P} stroke="#000" />
    ))}
    <Tank x={150} y={276} />
    <Tank x={918} y={276} />
    <Tank x={918} y={148} />
    <g fill="none" transform="translate(276 276)"><PumpShape /></g>
    <g fill="none" transform="translate(276 404)"><PumpShape /></g>
    <Valve x={417} y={288} fill="#0054ff" right="#0024ff" />
    <Valve x={417} y={416} fill="#0054ff" right="#0024ff" />
    <Valve x={801} y={160} fill="#0026ff" right="#ff2000" />

    {labels.map((l) => (
      <g key={l.id}>
        {l.xt && <text x={l.xt} y={l.y + 1} fill="#f00000">XT</text>}
        <text x={l.x} y={l.y}>{l.id}</text>
        <text x={l.x} y={l.y + l.gap}>{l.text}</text>
      </g>
    ))}
  </svg>
);

const legendValues = ["5.02", "4.54", "4.05", "3.57", "3.08", "2.60", "2.12", "1.63", "1.15", "0.66", "0.18"];

const Legend = () => (
  <div className={`absolute left-0 top-[384px] w-[187px] border border-[#8c8c8c] bg-white pl-[7px] pt-2 text-black ${ARIAL}`}>
    <p className="whitespace-nowrap text-[16px] font-bold leading-5">Pressure Static (barG)</p>
    <p className="text-[16px] leading-5">Absolute Values</p>
    <div className="flex gap-[5px] pl-px">
      <div className="mb-1.5 mt-2 w-[52px] border-2 border-[#8f8f8f] bg-[linear-gradient(#ff0000,#ffff00_27%,#00ff00_50%,#00ffff_76%,#0000ff)]" />
      <ul className="flex h-[183px] flex-col justify-between text-[13px] leading-[15px]">
        {legendValues.map((v) => (
          <li key={v}>{v}</li>
        ))}
      </ul>
    </div>
  </div>
);

const Chevron = ({ d }: { d: string }) => (
  <Svg w={8} h={8}>
    <path d={d} stroke="#505050" strokeWidth="1.8" />
  </Svg>
);

const Workspace = () => (
  <section className="flex min-w-0 flex-1 flex-col border border-[#a3a7b5] bg-[#f0f0f0]" aria-label="Workspace">
    <PlayBar />
    <div className="flex min-h-0 flex-1 flex-col p-px">
      <div className="flex min-h-0 flex-1">
        <div className="relative min-w-0 flex-1 overflow-hidden bg-white">
          <Diagram />
          <div className={`absolute left-0 top-0 flex h-[30px] w-[170px] items-center border border-[#8c8c8c] bg-white pl-1.5 text-[16px] text-black ${ARIAL}`}>
            Time (seconds): 0.00
          </div>
          <Legend />
        </div>
        <div className="flex w-4 shrink-0 flex-col bg-[#f0f0f0]">
          <button type="button" aria-label="Scroll up" className="flex h-4 items-center justify-center">
            <Chevron d="m1 6 3-3 3 3" />
          </button>
          <span className="h-[605px] bg-[#cdcdcd]" />
          <button type="button" aria-label="Scroll down" className="mt-1 flex h-4 items-center justify-center">
            <Chevron d="m1 2 3 3 3-3" />
          </button>
        </div>
      </div>
      <div className="flex h-4 shrink-0 bg-[#f0f0f0] pr-[18px]">
        <button type="button" aria-label="Scroll left" className="flex w-4 items-center justify-center">
          <Chevron d="M6 1 3 4l3 3" />
        </button>
        <span className="w-[883px] bg-[#cdcdcd]" />
        <button type="button" aria-label="Scroll right" className="ml-auto flex w-4 items-center justify-center">
          <Chevron d="m2 1 3 3-3 3" />
        </button>
      </div>
    </div>
  </section>
);

const StatusBar = () => (
  <footer className="flex h-[27px] shrink-0 items-center border-t border-[#b4b7c2] bg-linear-to-b from-[#d9dae1] to-[#c6c8d1] pl-2.5 pt-0.5 text-[11px] text-[#2b2b45]">
    Base Scenario/Two Pump Start
    <Sep className="ml-auto w-2" />
    <span className="flex w-[46px] items-center gap-1.5 pl-2">
      <Svg w={14} h={7} crisp>
        <path d="M0 3h14v1H0zM6 1h3v5H6z" fill="#000" />
      </Svg>
      11
    </span>
    <Sep className="w-2" />
    <span className="flex w-[47px] items-center gap-1.5 pl-2.5">
      <span className="h-[11px] w-[11px] border border-black bg-[#00ffff]" />
      11
    </span>
    <Sep className="w-2" />
  </footer>
);

/* ---------- right side ---------- */

const sideBar = "flex h-[30px] shrink-0 items-center border-b border-[#b4b7c2] bg-linear-to-b from-white to-[#eff1f5] pr-1.5";

const LayerPresets = () => (
  <section className="flex h-[175px] shrink-0 flex-col bg-white" aria-label="Layer Presets">
    <header className="flex h-5 shrink-0 items-center justify-between border-b border-[#a3a7b5] bg-[#e3e4e9] pl-1 pr-2">
      <h2 className={`text-[11px] font-bold text-[#5c5c66] ${ARIAL}`}>Layer Presets</h2>
      <PinIcon />
    </header>
    <div className={sideBar}>
      <ToolButton label="Add preset" className="w-[30px]"><PlusIcon /></ToolButton>
      <Sep className="w-1" />
      <ToolButton label="Rename preset" className="w-7"><RenameIcon /></ToolButton>
      <ToolButton label="Copy preset" className="w-6"><CopyIcon /></ToolButton>
      <ToolButton label="Delete preset" className="w-7"><CrossIcon color="#e0281e" width={2} /></ToolButton>
      <ToolButton label="Preset help" className="ml-auto w-4"><InfoIcon /></ToolButton>
    </div>
    <table className={`w-full table-fixed text-left text-[11px] text-[#77777c] ${ARIAL}`}>
      <thead>
        <tr className="h-[25px] border-b border-[#a5a5a5] bg-[#f8f8f8]">
          <th className="pl-1 font-normal">Layer Preset</th>
          <th className="w-[50px] p-0 font-normal"><span className="flex h-5 items-center border-l border-[#a5a5a5] pl-1">Load</span></th>
          <th className="w-[50px] p-0 font-normal"><span className="flex h-5 items-center border-l border-[#a5a5a5] pl-1">Update</span></th>
          <th className="w-[74px] p-0 font-normal"><span className="flex h-5 items-center border-l border-[#a5a5a5] pl-1 whitespace-nowrap">Link Scenario</span></th>
        </tr>
      </thead>
    </table>
  </section>
);

const TreeChevron = () => (
  <span className="flex w-[18px] shrink-0 items-center">
    <Svg w={10} h={6}>
      <path d="m1 1 4 4 4-4" stroke="#444" strokeWidth="1.5" />
    </Svg>
  </span>
);

const LayersPanel = () => (
  <section className="ml-0.5 mt-0.5 flex min-h-0 flex-1 flex-col border-t border-[#a3a7b5] bg-white" aria-label="Layers">
    <header className="flex h-[23px] shrink-0 items-center gap-1 bg-linear-to-b from-[#e6e7ec] to-[#dadce3] pl-[11px]">
      <LayersIcon />
      <h2 className="font-semibold text-[#5f6068]">Layers</h2>
    </header>
    <div className={sideBar}>
      <ToolButton label="Add layer" className="w-7"><PlusIcon /></ToolButton>
      <ToolButton label="Move up" className="w-6"><ArrowIcon /></ToolButton>
      <ToolButton label="Move down" className="w-7"><ArrowIcon down /></ToolButton>
      <Sep className="w-1.5" />
      <ToolButton label="Rename layer" className="w-7"><RenameIcon /></ToolButton>
      <ToolButton label="Copy layer" className="w-6"><CopyIcon /></ToolButton>
      <ToolButton label="Delete layer" className="w-7"><CrossIcon color="#e0281e" width={2} /></ToolButton>
      <Sep className="w-1.5" />
      <ToolButton label="Show or hide" className="w-6"><EyeIcon /></ToolButton>
      <ToolButton label="Layer settings" className="w-7"><FaCog size={14} color="#2f78ba" /></ToolButton>
      <Sep className="w-1.5" />
      <ToolButton label="All settings" className="w-7"><GearsIcon /></ToolButton>
      <ToolButton label="Layer help" className="ml-auto w-4"><InfoIcon /></ToolButton>
    </div>
    <ul className={`pl-1 pr-2.5 pt-2.5 text-[11px] text-[#3c3c3c] ${ARIAL}`}>
      <li className="flex h-[22px] items-center">
        <button type="button" aria-label="Collapse Color Maps/Animations"><TreeChevron /></button>
        <span className="ml-[-3px] flex h-full flex-1 items-center gap-[5px] bg-[#f0f0f0] pl-0.5 font-bold">
          <GridIcon />
          Color Maps/Animations
        </span>
      </li>
      <li className="ml-[33px] flex h-[22px] items-center gap-[5px] bg-[#cce4f7] pl-0.5 pr-8">
        <GridIcon />
        Static Pressure Animation
        <button type="button" aria-label="Toggle Static Pressure Animation" className="ml-auto"><EyeIcon /></button>
      </li>
      <li className="flex h-[22px] items-center">
        <button type="button" aria-label="Collapse Standard"><TreeChevron /></button>
        <span className="ml-[-3px] flex h-full flex-1 items-center gap-[5px] bg-[#f0f0f0] pl-0.5 font-bold">
          <StandardIcon />
          Standard
        </span>
      </li>
      <li className="flex h-[22px] items-center gap-1 pl-9 pr-8 font-bold">
        [All Objects Layer]
        <button type="button" aria-label="Edit All Objects Layer" className="ml-auto"><PencilIcon /></button>
        <button type="button" aria-label="Toggle All Objects Layer"><EyeIcon /></button>
      </li>
    </ul>
  </section>
);

const SideTabs = () => (
  <nav className="flex h-[31px] shrink-0 items-start border-t border-[#8f93a0] bg-[#f0f0f0] pl-[3px] text-[11px] text-[#55565f]" aria-label="Panels">
    <button type="button" className="flex h-7 w-[84px] items-center gap-1 border-b border-l border-r border-[#a3a7b5] bg-[#e6e7eb] pl-2">
      <ScenarioIcon />
      Scenario
    </button>
    <button type="button" className="flex h-7 w-[92px] items-center gap-1 border-b border-r border-[#a3a7b5] bg-[#e6e7eb] pl-2">
      <PropertiesIcon />
      Properties
    </button>
    <button type="button" className="flex h-[30px] w-[134px] items-center gap-1 border-b border-r border-[#a3a7b5] bg-white pl-2.5 text-[#2b2b45] whitespace-nowrap">
      <LayersIcon />
      Workspace Layers
    </button>
  </nav>
);

const SideStatus = () => (
  <footer className="flex h-[27px] shrink-0 items-center border-t border-[#b4b7c2] bg-linear-to-b from-[#d9dae1] to-[#c6c8d1] pl-1.5 pt-0.5 text-[#2b2b45]">
    <button type="button" className="flex items-center gap-1">
      <OverviewIcon />
      Overview Map
    </button>
    <button type="button" className="ml-auto flex items-center gap-1">
      <ModulesIcon />
      Add-on Modules
    </button>
    <Sep className="ml-2 w-2" />
    <Svg w={17} h={17}>
      <circle cx="9" cy="8.5" r="7.5" fill="#38b02c" stroke="#2b7a24" />
      <ellipse cx="9" cy="5" rx="5" ry="3" fill="#a6e89b" />
    </Svg>
  </footer>
);

const App = () => {
  return (
    <div className={`flex h-screen overflow-hidden bg-[#e9ebef] text-[12px] leading-4 text-[#111] ${UI_FONT}`}>
      <main className="flex min-w-0 flex-1 flex-col bg-[linear-gradient(90deg,#474f58_0px,#7d818a_500px,#b6babc_996px,#e8e9eb_996px)] pb-0.5 pl-0.5">
        <TopTabs />
        <div className="flex min-h-0 flex-1 flex-col border border-[#a3a7b5] bg-[#eef0f4]">
          <MainToolbar />
          <div className="flex min-h-0 flex-1 gap-1 pb-0.5 pl-0.5 pr-0.5 pt-1">
            <Toolbox />
            <Workspace />
          </div>
          <StatusBar />
        </div>
      </main>
      <aside className="mb-0.5 ml-1 mr-0.5 mt-1 flex w-[405px] shrink-0 flex-col border-2 border-[#a3a7b5] bg-[#f0f0f0]">
        <LayerPresets />
        <LayersPanel />
        <SideTabs />
        <SideStatus />
      </aside>
    </div>
  );
};

export default App;
